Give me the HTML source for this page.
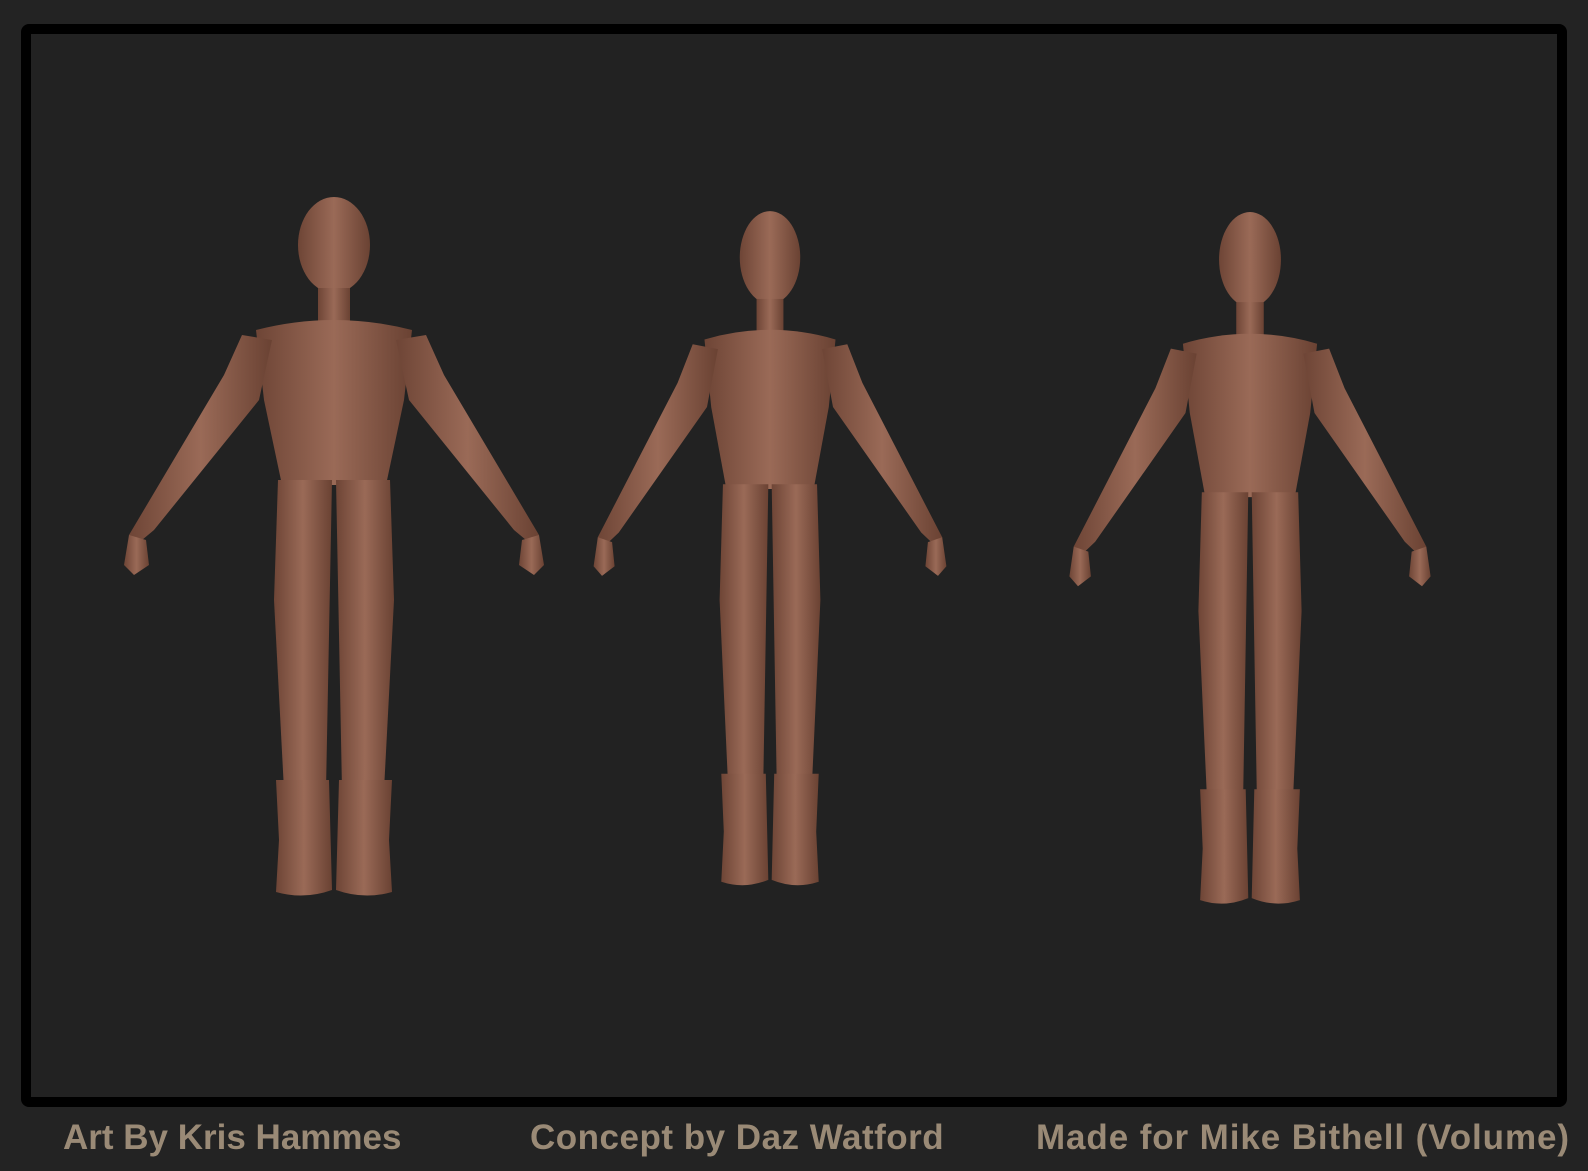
<!DOCTYPE html>
<html><head><meta charset="utf-8"><style>
html,body{margin:0;padding:0;background:#232323;}
body{width:1588px;height:1171px;position:relative;overflow:hidden;font-family:"Liberation Sans",sans-serif;}
.frame{position:absolute;left:21px;top:24px;width:1526px;height:1063px;border:10px solid #000;border-radius:8px;background:#222;}
.t{position:absolute;top:1118px;font-size:35px;font-weight:bold;color:#9a8a76;white-space:nowrap;}
svg{position:absolute;left:0;top:0;}
</style></head><body>
<div class="frame"></div>
<svg width="1588" height="1171" viewBox="0 0 1588 1171">
<defs>
<linearGradient id="g" x1="0" x2="1" y1="0" y2="0">
<stop offset="0" stop-color="#6e4536"/><stop offset="0.5" stop-color="#9a6a57"/><stop offset="1" stop-color="#6a4233"/>
</linearGradient>
<g id="fig" fill="url(#g)">
<ellipse cx="0" cy="45" rx="36" ry="48"/>
<rect x="-16" y="88" width="32" height="40"/>
<path d="M-78 130 Q0 110 78 130 L70 200 L52 285 L-52 285 L-70 200 Z"/>
<path d="M-92 135 L-62 140 L-75 200 L-180 330 L-198 345 L-205 335 L-110 175 Z"/>
<path d="M92 135 L62 140 L75 200 L180 330 L198 345 L205 335 L110 175 Z"/>
<path d="M-205 335 L-188 340 L-185 365 L-200 375 L-210 365 Z"/>
<path d="M205 335 L188 340 L185 365 L200 375 L210 365 Z"/>
<path d="M-56 280 L-2 280 L-8 590 L-50 590 L-60 400 Z"/>
<path d="M56 280 L2 280 L8 590 L50 590 L60 400 Z"/>
<path d="M-58 580 L-5 580 L-2 690 Q-30 700 -58 692 L-55 640 Z"/>
<path d="M58 580 L5 580 L2 690 Q30 700 58 692 L55 640 Z"/>
</g>
</defs>
<use href="#fig" transform="translate(334,200)"/>
<use href="#fig" transform="translate(770,214) scale(0.84,0.965)"/>
<use href="#fig" transform="translate(1250,215) scale(0.86,0.99)"/>
</svg>
<div class="t" style="left:63px">Art By Kris Hammes</div>
<div class="t" style="left:530px;letter-spacing:0.5px">Concept by Daz Watford</div>
<div class="t" style="left:1036px;letter-spacing:0.9px">Made for Mike Bithell (Volume)</div>
</body></html>
